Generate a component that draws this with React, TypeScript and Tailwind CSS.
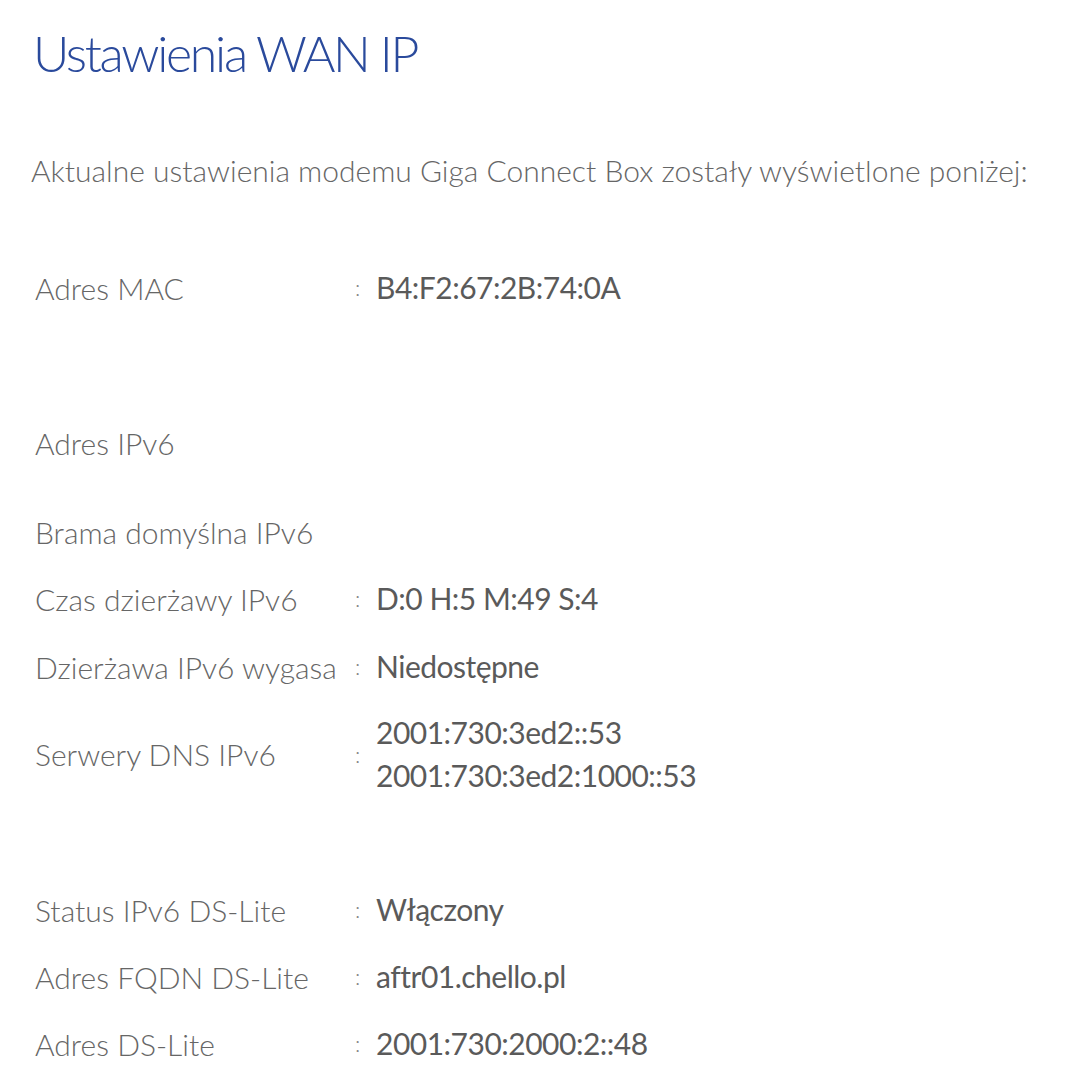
const rows: { label: string; value?: string[]; gap: string }[] = [
  { label: 'Adres MAC', value: ['B4:F2:67:2B:74:0A'], gap: 'mt-[78px]' },
  { label: 'Adres IPv6', gap: 'mt-[117px]' },
  { label: 'Brama domyślna IPv6', gap: 'mt-[55px]' },
  { label: 'Czas dzierżawy IPv6', value: ['D:0 H:5 M:49 S:4'], gap: 'mt-[28px]' },
  { label: 'Dzierżawa IPv6 wygasa', value: ['Niedostępne'], gap: 'mt-[25px]' },
  { label: 'Serwery DNS IPv6', value: ['2001:730:3ed2::53', '2001:730:3ed2:1000::53'], gap: 'mt-[23px]' },
  { label: 'Status IPv6 DS-Lite', value: ['Włączony'], gap: 'mt-[91px]' },
  { label: 'Adres FQDN DS-Lite', value: ['aftr01.chello.pl'], gap: 'mt-[24px]' },
  { label: 'Adres DS-Lite', value: ['2001:730:2000:2::48'], gap: 'mt-[24px]' },
];

export default function App() {
  return (
    <div className="min-h-screen bg-white px-[33px] pt-[23px] font-['Lato','Liberation_Sans',sans-serif]">
      <h1 className="text-[50px] font-light leading-[60px] tracking-[-2.3px] text-[#2a4a9c]">Ustawienia WAN IP</h1>
      <p className="mt-[69px] -ml-[2px] text-[30px] font-light leading-[36px] text-[#666]">
        Aktualne ustawienia modemu Giga Connect Box zostały wyświetlone poniżej:
      </p>
      <div className="ml-[2px] flex flex-col">
        {rows.map((r) => (
          <div key={r.label} className={`flex items-center ${r.gap}`}>
            <div className="w-[320px] text-[30px] font-light leading-[34px] text-[#666]">{r.label}</div>
            {r.value && (
              <>
                <div className="w-[21px] text-[22px] font-light text-[#888]">:</div>
                <div className="flex flex-col text-[30px] leading-[43px] tracking-[-0.5px] text-[#5a5a5a]">
                  {r.value.map((v) => (
                    <span key={v}>{v}</span>
                  ))}
                </div>
              </>
            )}
          </div>
        ))}
      </div>
    </div>
  );
}
